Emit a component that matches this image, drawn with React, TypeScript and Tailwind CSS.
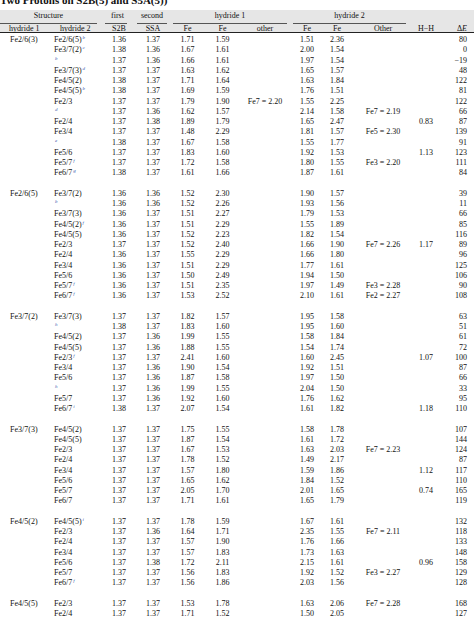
import React from "react";

type Row = [string, string, string, string, string, string, string, string, string, string, string, string];

const groups: { h1: string; rows: Row[] }[] = [
  {
    h1: "Fe2/6(3)",
    rows: [
      ["Fe2/6(5)", "b", "1.36", "1.37", "1.71", "1.59", "", "1.51", "2.36", "", "", "80"],
      ["Fe3/7(2)", "c", "1.38", "1.36", "1.67", "1.61", "", "2.00", "1.54", "", "", "0"],
      ["", "b", "1.37", "1.36", "1.66", "1.61", "", "1.97", "1.54", "", "", "−19"],
      ["Fe3/7(3)", "d", "1.37", "1.37", "1.63", "1.62", "", "1.65", "1.57", "", "", "48"],
      ["Fe4/5(2)", "", "1.38", "1.37", "1.71", "1.64", "", "1.63", "1.84", "", "", "122"],
      ["Fe4/5(5)", "b", "1.38", "1.37", "1.69", "1.59", "", "1.76", "1.51", "", "", "81"],
      ["Fe2/3", "", "1.37", "1.37", "1.79", "1.90", "Fe7 = 2.20", "1.55", "2.25", "", "", "122"],
      ["", "d", "1.37", "1.36", "1.62", "1.57", "", "2.14", "1.58", "Fe7 = 2.19", "", "66"],
      ["Fe2/4", "", "1.37", "1.38", "1.89", "1.79", "", "1.65", "2.47", "", "0.83", "87"],
      ["Fe3/4", "", "1.37", "1.37", "1.48", "2.29", "", "1.81", "1.57", "Fe5 = 2.30", "", "139"],
      ["", "e", "1.38", "1.37", "1.67", "1.58", "", "1.55", "1.77", "", "", "91"],
      ["Fe5/6", "", "1.37", "1.37", "1.83", "1.60", "", "1.92", "1.53", "", "1.13", "123"],
      ["Fe5/7", "f", "1.37", "1.37", "1.72", "1.58", "", "1.80", "1.55", "Fe3 = 2.20", "", "111"],
      ["Fe6/7", "g", "1.38", "1.37", "1.61", "1.66", "", "1.87", "1.61", "", "", "84"],
    ],
  },
  {
    h1: "Fe2/6(5)",
    rows: [
      ["Fe3/7(2)", "", "1.36", "1.36", "1.52", "2.30", "", "1.90", "1.57", "", "", "39"],
      ["", "b", "1.36", "1.36", "1.52", "2.26", "", "1.93", "1.56", "", "", "11"],
      ["Fe3/7(3)", "", "1.36", "1.37", "1.51", "2.27", "", "1.79", "1.53", "", "", "66"],
      ["Fe4/5(2)", "f", "1.36", "1.37", "1.51", "2.29", "", "1.55", "1.89", "", "", "85"],
      ["Fe4/5(5)", "", "1.36", "1.37", "1.52", "2.23", "", "1.82", "1.54", "", "", "116"],
      ["Fe2/3", "", "1.37", "1.37", "1.52", "2.40", "", "1.66", "1.90", "Fe7 = 2.26", "1.17", "89"],
      ["Fe2/4", "", "1.36", "1.37", "1.55", "2.29", "", "1.66", "1.80", "", "", "96"],
      ["Fe3/4", "", "1.36", "1.37", "1.51", "2.29", "", "1.77", "1.61", "", "", "125"],
      ["Fe5/6", "", "1.36", "1.37", "1.50", "2.49", "", "1.94", "1.50", "", "", "106"],
      ["Fe5/7", "f", "1.36", "1.37", "1.51", "2.35", "", "1.97", "1.49", "Fe3 = 2.28", "", "90"],
      ["Fe6/7", "f", "1.36", "1.37", "1.53", "2.52", "", "2.10", "1.61", "Fe2 = 2.27", "", "108"],
    ],
  },
  {
    h1: "Fe3/7(2)",
    rows: [
      ["Fe3/7(3)", "", "1.37", "1.37", "1.82", "1.57", "", "1.95", "1.58", "", "", "63"],
      ["", "h", "1.38", "1.37", "1.83", "1.60", "", "1.95", "1.60", "", "", "51"],
      ["Fe4/5(2)", "", "1.37", "1.36", "1.99", "1.55", "", "1.58", "1.84", "", "", "61"],
      ["Fe4/5(5)", "", "1.37", "1.36", "1.88", "1.55", "", "1.54", "1.74", "", "", "72"],
      ["Fe2/3", "f", "1.37", "1.37", "2.41", "1.60", "", "1.60", "2.45", "", "1.07", "100"],
      ["Fe3/4", "", "1.37", "1.36", "1.90", "1.54", "", "1.92", "1.51", "", "", "87"],
      ["Fe5/6", "", "1.37", "1.36", "1.87", "1.58", "", "1.97", "1.50", "", "", "66"],
      ["", "h", "1.37", "1.36", "1.99", "1.55", "", "2.04", "1.50", "", "", "33"],
      ["Fe5/7", "", "1.37", "1.36", "1.92", "1.60", "", "1.76", "1.62", "", "", "95"],
      ["Fe6/7", "i", "1.38", "1.37", "2.07", "1.54", "", "1.61", "1.82", "", "1.18", "110"],
    ],
  },
  {
    h1: "Fe3/7(3)",
    rows: [
      ["Fe4/5(2)", "", "1.37", "1.37", "1.75", "1.55", "", "1.58", "1.78", "", "", "107"],
      ["Fe4/5(5)", "", "1.37", "1.37", "1.87", "1.54", "", "1.61", "1.72", "", "", "144"],
      ["Fe2/3", "", "1.37", "1.37", "1.67", "1.53", "", "1.63", "2.03", "Fe7 = 2.23", "", "124"],
      ["Fe2/4", "", "1.37", "1.37", "1.78", "1.52", "", "1.49", "2.17", "", "", "87"],
      ["Fe3/4", "", "1.37", "1.37", "1.57", "1.80", "", "1.59", "1.86", "", "1.12", "117"],
      ["Fe5/6", "", "1.37", "1.37", "1.65", "1.62", "", "1.84", "1.52", "", "", "110"],
      ["Fe5/7", "", "1.37", "1.37", "2.05", "1.70", "", "2.01", "1.65", "", "0.74", "165"],
      ["Fe6/7", "", "1.37", "1.37", "1.71", "1.61", "", "1.65", "1.79", "", "", "119"],
    ],
  },
  {
    h1: "Fe4/5(2)",
    rows: [
      ["Fe4/5(5)", "i", "1.37", "1.37", "1.78", "1.59", "", "1.67", "1.61", "", "", "132"],
      ["Fe2/3", "", "1.37", "1.36", "1.64", "1.71", "", "2.35", "1.55", "Fe7 = 2.11", "", "118"],
      ["Fe2/4", "", "1.37", "1.37", "1.57", "1.90", "", "1.76", "1.66", "", "", "133"],
      ["Fe3/4", "", "1.37", "1.37", "1.57", "1.83", "", "1.73", "1.63", "", "", "148"],
      ["Fe5/6", "", "1.37", "1.38", "1.72", "2.11", "", "2.15", "1.61", "", "0.96", "158"],
      ["Fe5/7", "", "1.37", "1.37", "1.56", "1.83", "", "1.92", "1.52", "Fe3 = 2.27", "", "129"],
      ["Fe6/7", "f", "1.37", "1.37", "1.56", "1.86", "", "2.03", "1.56", "", "", "128"],
    ],
  },
  {
    h1: "Fe4/5(5)",
    rows: [
      ["Fe2/3", "", "1.37", "1.37", "1.53", "1.78", "", "1.63", "2.06", "Fe7 = 2.28", "", "168"],
      ["Fe2/4", "", "1.37", "1.37", "1.71", "1.52", "", "1.50", "2.05", "", "", "127"],
    ],
  },
];

const G =
  "grid grid-cols-[52px_50px_34px_34px_35px_35px_50px_34px_26px_66px_20px_38px]";

function Sup({ s }: { s: string }) {
  if (!s) return null;
  return (
    <span className="relative -top-[3px] ml-[1px] text-[5px] italic leading-none text-[#3b5cb0]">
      {s}
    </span>
  );
}

export default function App() {
  return (
    <div
      className="w-[474px] h-[620px] overflow-hidden bg-white text-[#111] text-[8px]"
      style={{ fontFamily: '"Liberation Serif", "Times New Roman", serif' }}
    >
      <div className="h-[10px] overflow-hidden relative">
        <div className="-mt-[6px] text-[11px] font-bold leading-[12px] text-[#111] whitespace-nowrap">
          Two Protons on S2B(5) and S5A(5))
        </div>
      </div>
      <div className="bg-[#e6e6e6]">
        <div className={`${G} h-[14px] items-start`}>
          <div className="col-span-2 mr-[5px] h-[14px] border-b border-[#555] text-center leading-[11px]">
            Structure
          </div>
          <div className="ml-[3px] mr-[9px] h-[14px] border-b border-[#555] text-center leading-[11px] pl-[3px]">
            first
          </div>
          <div className="ml-[1px] mr-[3px] h-[14px] border-b border-[#555] text-center leading-[11px]">
            second
          </div>
          <div className="col-span-3 ml-[3px] mr-[3px] h-[14px] border-b border-[#555] text-center leading-[11px]">
            hydride 1
          </div>
          <div className="col-span-3 ml-[3px] mr-[10px] h-[14px] border-b border-[#555] text-center leading-[11px]">
            hydride 2
          </div>
          <div />
          <div />
        </div>
        <div className={`${G} h-[9px] leading-[10px] border-b-[1.5px] border-[#222]`}>
          <div className="pl-[9px]">hydride 1</div>
          <div className="pl-[8px]">hydride 2</div>
          <div className="text-center">S2B</div>
          <div className="text-center">SSA</div>
          <div className="text-center">Fe</div>
          <div className="text-center">Fe</div>
          <div className="text-center">other</div>
          <div className="text-center">Fe</div>
          <div className="text-center">Fe</div>
          <div className="text-center">Other</div>
          <div className="text-center whitespace-nowrap">H−H</div>
          <div className="text-right pr-[7px]">
            Δ<span className="italic">E</span>
          </div>
        </div>
      </div>
      <div className="h-[2px]" />
      {groups.map((g, gi) => (
        <div key={gi}>
          {gi > 0 && <div className="h-[10.25px]" />}
          {g.rows.map((r, ri) => (
            <div key={ri} className={`${G} h-[10.25px] leading-[10.25px] whitespace-nowrap`}>
              <div className="pl-[10px]">{ri === 0 ? g.h1 : ""}</div>
              <div className="pl-[2px]">
                {r[0]}
                <Sup s={r[1]} />
              </div>
              <div className="text-center">{r[2]}</div>
              <div className="text-center">{r[3]}</div>
              <div className="text-center">{r[4]}</div>
              <div className="text-center">{r[5]}</div>
              <div className="text-center">{r[6]}</div>
              <div className="text-center">{r[7]}</div>
              <div className="text-center">{r[8]}</div>
              <div className="text-center">{r[9]}</div>
              <div className="text-center">{r[10]}</div>
              <div className="text-right pr-[7px]">{r[11]}</div>
            </div>
          ))}
        </div>
      ))}
    </div>
  );
}
